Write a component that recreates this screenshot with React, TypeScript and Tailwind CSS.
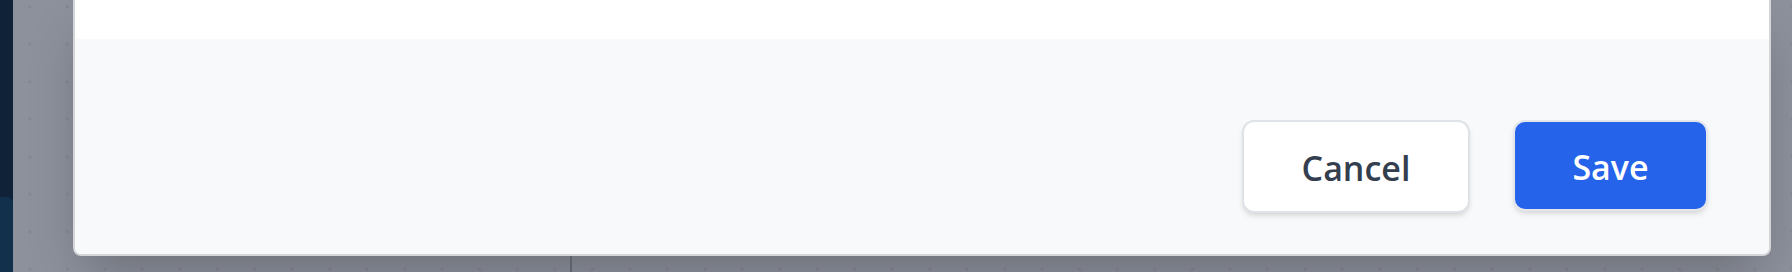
export default function App() {
  return (
    <div className="flex h-[272px] w-full overflow-hidden font-['Open_Sans','Noto_Sans',sans-serif]">
      {/* sidebar edge behind the overlay */}
      <div className="flex w-[13px] shrink-0 flex-col bg-[#0f2238]">
        <div className="h-[197px]" />
        <div className="flex-1 rounded-tr-[6px] bg-[#12304b]" />
      </div>

      {/* dimmed page + dialog */}
      <div className="flex flex-1 flex-col justify-end bg-[#8d919c] bg-[radial-gradient(circle,#838792_1.4px,transparent_1.7px)] bg-[length:37.5px_37.5px] bg-[position:-2px_-12px] pl-[60px] pr-[21px]">
        <div className="flex flex-col overflow-hidden rounded-b-[8px] border-2 border-t-0 border-[#d3d5d9] bg-white shadow-2xl">
          <div className="h-[39px] bg-white" />
          <div className="flex h-[215px] items-start justify-end gap-[43px] bg-[#f8f9fb] pr-[61px] pt-[81px]">
            <button
              type="button"
              className="flex h-[93px] w-[228px] items-center justify-center rounded-[12px] border-2 border-[#dfe2e7] bg-white pt-[3px] text-[34px] font-semibold text-[#333e4e] shadow-md"
            >
              Cancel
            </button>
            <button
              type="button"
              className="flex h-[91px] w-[195px] items-center justify-center rounded-[12px] border-2 border-[#e3e6eb] bg-[#2563eb] pt-[3px] text-[34px] font-semibold text-white shadow-md"
            >
              Save
            </button>
          </div>
        </div>
        <div className="flex h-[16px] shrink-0">
          <div className="ml-[497px] w-[2px] bg-[#5d616c]" />
        </div>
      </div>
    </div>
  );
}
